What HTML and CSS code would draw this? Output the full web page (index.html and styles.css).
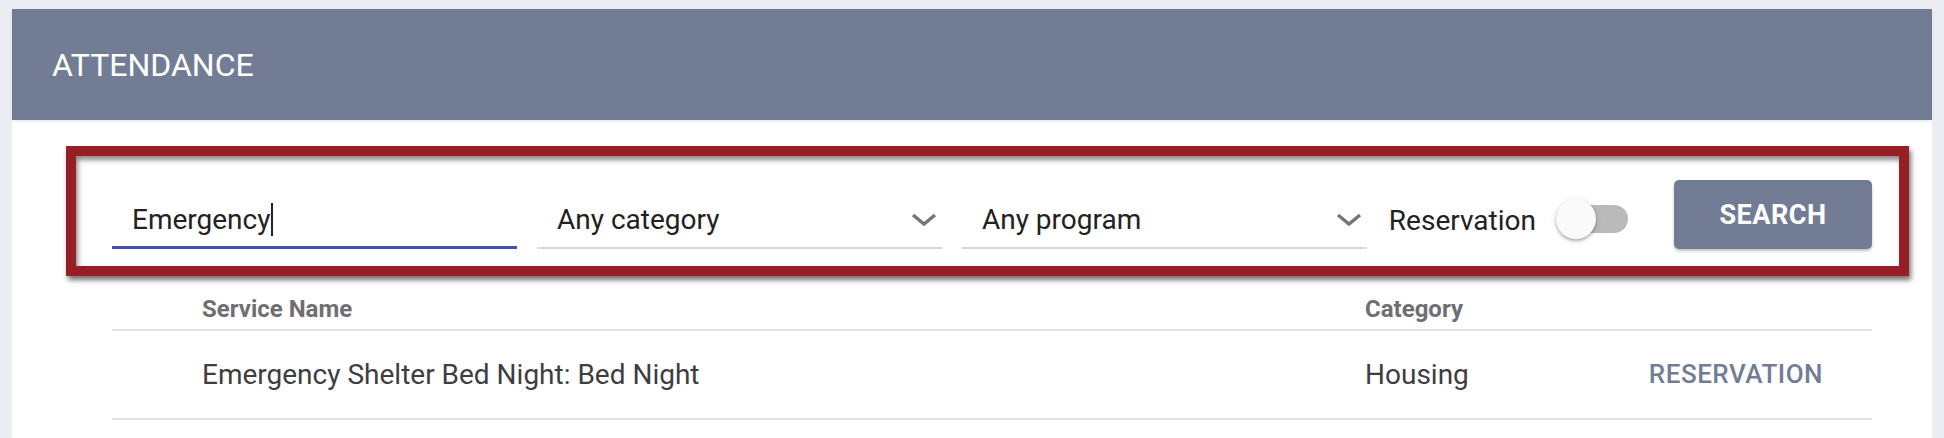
FILE: index.html
```html
<!DOCTYPE html>
<html lang="en">
<head>
  <meta charset="UTF-8" />
  <meta name="viewport" content="width=device-width, initial-scale=1.0"/>
  <title>Attendance</title>
  <link rel="stylesheet" href="styles.css">
</head>
<body>

  <div class="card">
    <div class="card-header">ATTENDANCE</div>

    <div class="filters">
      <div class="field text-field">
        <span>Emergency</span><span class="caret"></span>
      </div>
      <div class="field select-field">
        <span>Any category</span>
        <svg class="chevron" width="26" height="14" viewBox="0 0 26 14">
          <polyline points="2,2 13,11 24,2" fill="none" stroke="#767676" stroke-width="3.5"/>
        </svg>
      </div>
      <div class="field select-field">
        <span>Any program</span>
        <svg class="chevron" width="26" height="14" viewBox="0 0 26 14">
          <polyline points="2,2 13,11 24,2" fill="none" stroke="#767676" stroke-width="3.5"/>
        </svg>
      </div>
      <div class="reservation">
        <span class="label">Reservation</span>
        <div class="switch">
          <div class="track"></div>
          <div class="thumb"></div>
        </div>
      </div>
      <button class="search-btn">SEARCH</button>
    </div>

    <div class="table">
      <div class="row head">
        <div>Service Name</div>
        <div>Category</div>
        <div></div>
      </div>
      <div class="row">
        <div>Emergency Shelter Bed Night: Bed Night</div>
        <div>Housing</div>
        <div class="action">RESERVATION</div>
      </div>
    </div>
  </div>

</body>
</html>
```

FILE: styles.css
```css
* {
  box-sizing: border-box;
  margin: 0;
  padding: 0;
}

body {
  font-family: Roboto, 'Liberation Sans', sans-serif;
  background: #ecedf3;
  color: #3d3d42;
  height: 438px;
  overflow: hidden;
}

.card {
  margin: 9px 12px 0 12px;
  background: #fff;
  min-height: 429px;
}

.card-header {
  height: 111px;
  display: flex;
  align-items: center;
  padding-left: 40px;
  background: #727d95;
  color: #fff;
  font-size: 32px;
  box-shadow: 0 2px 3px rgba(0, 0, 0, 0.08);
}

.filters {
  display: flex;
  align-items: flex-end;
  gap: 20px;
  margin: 26px 23px 0 54px;
  padding: 24px 27px 17px 36px;
  border: 10px solid #951f24;
  box-shadow: 2px 4px 5px rgba(0, 0, 0, 0.55), inset 2px 4px 5px rgba(0, 0, 0, 0.45);
}

.field {
  flex: 1;
  display: flex;
  align-items: center;
  padding: 0 5px 11px 20px;
  font-size: 28px;
  line-height: 33px;
  color: #222;
  border-bottom: 2px solid #d6d6d6;
}

.text-field {
  padding-bottom: 10px;
  border-bottom: 3px solid #3f51b5;
}

.caret {
  display: inline-block;
  width: 2px;
  height: 33px;
  margin-left: 1px;
  background: #222;
}

.chevron {
  margin-left: auto;
}

.reservation {
  display: flex;
  align-items: center;
  gap: 20px;
  margin-left: 2px;
  padding-bottom: 10px;
  font-size: 28px;
  color: #222;
}

.reservation .label {
  padding-top: 6px;
}

.switch {
  position: relative;
  width: 72px;
  height: 40px;
  margin-top: 4px;
}

.switch .track {
  position: absolute;
  left: 6px;
  top: 6px;
  width: 66px;
  height: 28px;
  border-radius: 14px;
  background: #bababa;
}

.switch .thumb {
  position: absolute;
  left: 0;
  top: 0;
  width: 40px;
  height: 40px;
  border-radius: 50%;
  background: #fafafa;
  box-shadow: 0 2px 3px rgba(0, 0, 0, 0.25), 0 1px 6px rgba(0, 0, 0, 0.12);
}

.search-btn {
  width: 198px;
  height: 69px;
  margin-left: 26px;
  border: none;
  border-radius: 5px;
  background: #727d95;
  color: #fff;
  font-family: Roboto, 'Liberation Sans', sans-serif;
  font-size: 27px;
  font-weight: 700;
  letter-spacing: 0.5px;
  box-shadow: 0 2px 3px rgba(0, 0, 0, 0.25);
}

.table {
  margin: 0 60px 0 100px;
}

.row {
  display: grid;
  grid-template-columns: 1163px 1fr auto;
  padding: 27px 49px 27px 90px;
  font-size: 28px;
  line-height: 33px;
  border-bottom: 2px solid #e2e2e2;
}

.row.head {
  padding-top: 19px;
  padding-bottom: 6px;
  font-size: 24px;
  line-height: 28px;
  font-weight: 700;
  color: #6e6e73;
}

.action {
  font-size: 26px;
  font-weight: 500;
  letter-spacing: 0.5px;
  color: #727d95;
}
```
